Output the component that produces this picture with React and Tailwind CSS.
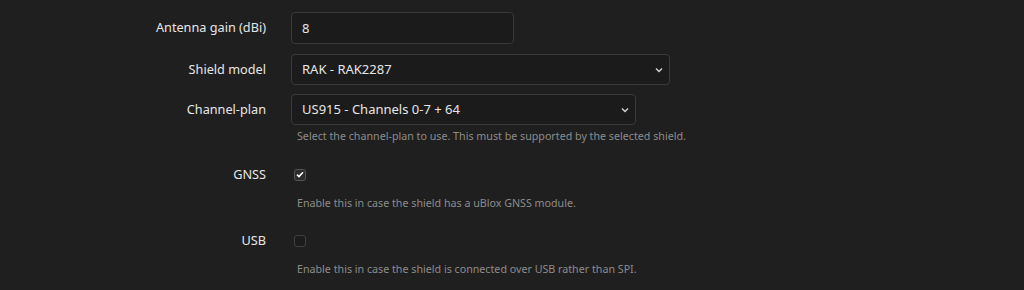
import React, { useState } from "react";

const Chevron = () => (
  <svg
    width="8"
    height="6"
    viewBox="0 0 8 6"
    className="absolute right-[6px] top-1/2 -translate-y-1/2 pointer-events-none"
  >
    <path d="M1 1.5 L4 4.5 L7 1.5" fill="none" stroke="#d4d4d4" strokeWidth="1.4" />
  </svg>
);

const Label = ({ children }) => (
  <div className="w-[266px] shrink-0 text-right text-[12.7px] text-[#e6e6e6]">{children}</div>
);

const Help = ({ children }) => (
  <div className="pl-[297px] text-[10.7px] text-[#8c8c8c]">{children}</div>
);

const Check = ({ checked, onChange }) => (
  <button
    onClick={onChange}
    className={
      "ml-[28px] w-[12px] h-[12px] rounded-[3px] border flex items-center justify-center " +
      (checked ? "bg-[#2b2b2b] border-[#555]" : "bg-[#1c1c1c] border-[#3f3f3f]")
    }
  >
    {checked && (
      <svg width="8" height="7" viewBox="0 0 8 7">
        <path d="M1 3.6 L3 5.5 L7 1.2" fill="none" stroke="#fff" strokeWidth="1.6" />
      </svg>
    )}
  </button>
);

const App = () => {
  const [gain, setGain] = useState("8");
  const [gnss, setGnss] = useState(true);
  const [usb, setUsb] = useState(false);

  return (
    <div
      className="w-[1024px] h-[290px] bg-[#1f1f1f] pt-[12px] overflow-hidden"
      style={{ fontFamily: '"Noto Sans", "Open Sans", sans-serif' }}
    >
      <div className="flex items-center">
        <Label>Antenna gain (dBi)</Label>
        <input
          value={gain}
          onChange={(e) => setGain(e.target.value)}
          className="ml-[25px] w-[223px] h-[32px] px-[10px] rounded-[4px] border border-[#3a3a3a] bg-[#1b1b1b] text-[13px] text-[#e6e6e6] outline-none"
        />
      </div>

      <div className="flex items-center mt-[10px]">
        <Label>Shield model</Label>
        <div className="relative ml-[25px] w-[379px] h-[31px] rounded-[4px] border border-[#3a3a3a] bg-[#1b1b1b] flex items-center px-[10px] text-[13px] text-[#e6e6e6]">
          RAK - RAK2287
          <Chevron />
        </div>
      </div>

      <div className="flex items-center mt-[9px]">
        <Label>Channel-plan</Label>
        <div className="relative ml-[25px] w-[345px] h-[31px] rounded-[4px] border border-[#3a3a3a] bg-[#1b1b1b] flex items-center px-[10px] text-[13px] text-[#e6e6e6]">
          US915 - Channels 0-7 + 64
          <Chevron />
        </div>
      </div>
      <div className="mt-[3px]">
        <Help>Select the channel-plan to use. This must be supported by the selected shield.</Help>
      </div>

      <div className="flex items-center mt-[21px]">
        <Label>GNSS</Label>
        <Check checked={gnss} onChange={() => setGnss(!gnss)} />
      </div>
      <div className="mt-[11px]">
        <Help>Enable this in case the shield has a uBlox GNSS module.</Help>
      </div>

      <div className="flex items-center mt-[20px]">
        <Label>USB</Label>
        <Check checked={usb} onChange={() => setUsb(!usb)} />
      </div>
      <div className="mt-[11px]">
        <Help>Enable this in case the shield is connected over USB rather than SPI.</Help>
      </div>
    </div>
  );
};

export default App;
